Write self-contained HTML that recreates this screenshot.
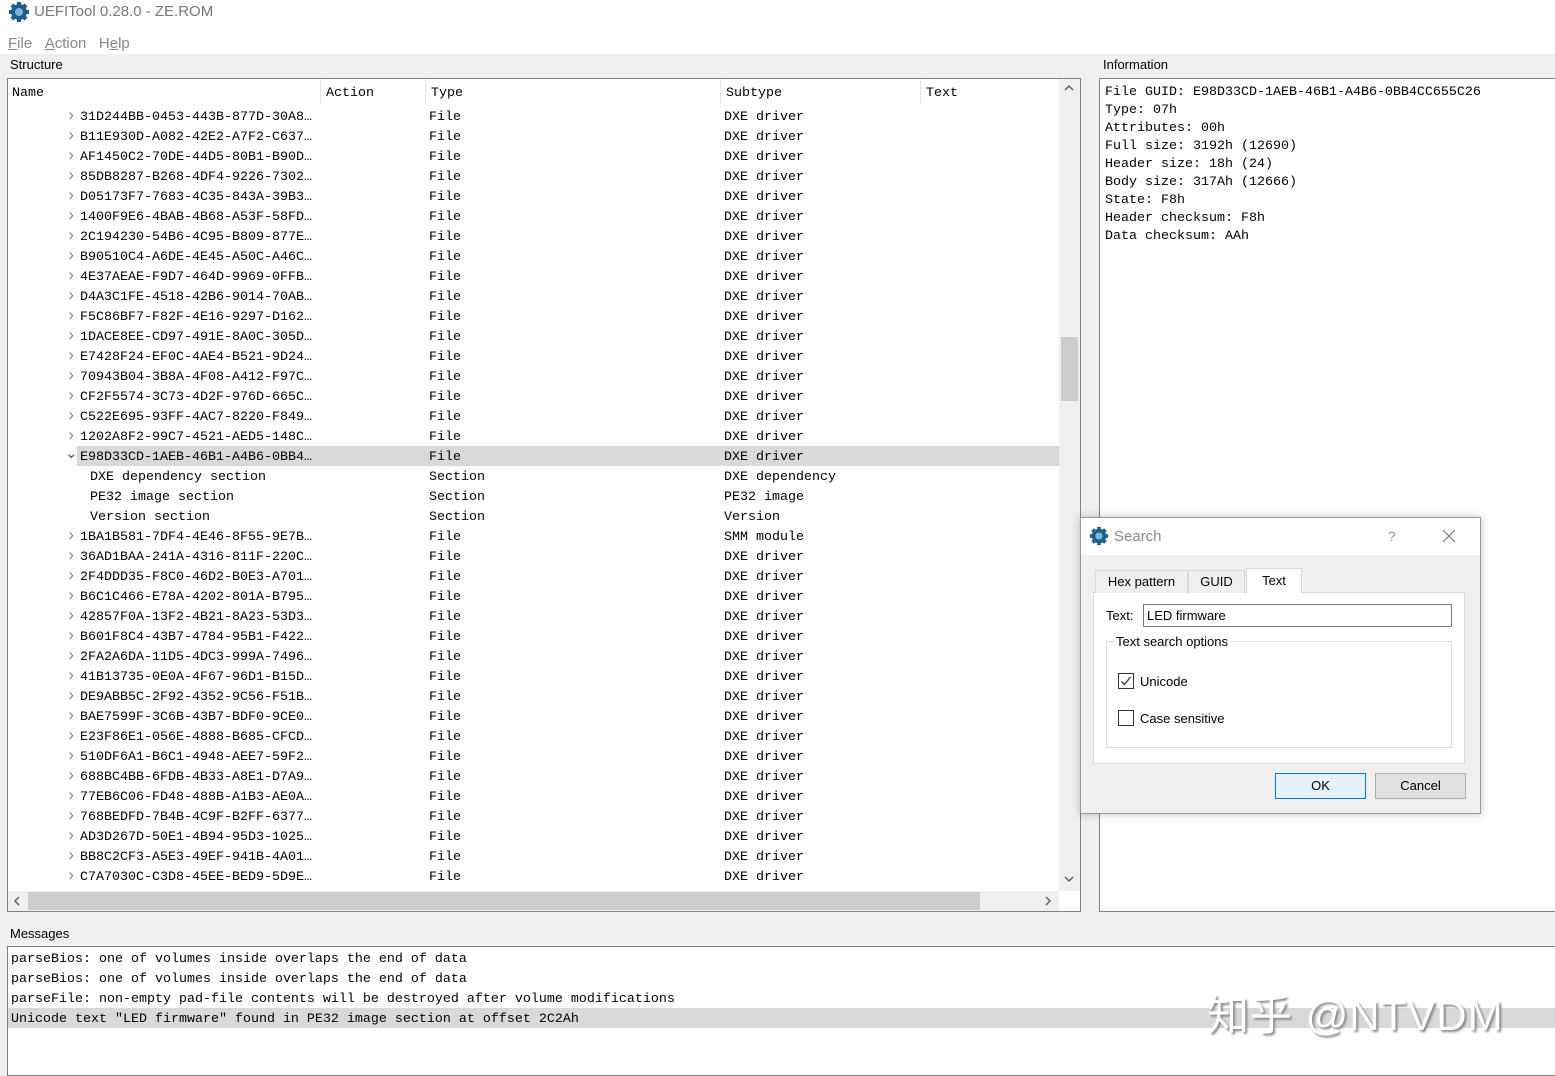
<!DOCTYPE html>
<html><head><meta charset="utf-8"><style>
*{margin:0;padding:0;box-sizing:border-box}
body{width:1555px;height:1071px;position:relative;background:#f0f0f0;font-family:"Liberation Sans",sans-serif;overflow:hidden}
.a{position:absolute}
.ui{font-size:13px;color:#000}
.mono{font-family:"Liberation Mono",monospace;font-size:13.33px;color:#000;white-space:pre}
.row{position:absolute;left:0;height:20px;line-height:20px;width:1051px}
.row span{position:absolute}
.row span.ar{color:#888;font-size:17px;left:58px;top:-1px}
.sel{background:#d9d9d9}
</style></head><body>
<div class="a" style="left:0;top:0;width:1555px;height:54px;background:#fff"></div>
<svg class="a" style="left:8px;top:1px" width="22" height="22" viewBox="0 0 22 22"><g fill="#1d5f8a"><circle cx="11" cy="11" r="8"/><rect x="9" y="1" width="4" height="20"/><rect x="1" y="9" width="20" height="4"/><rect x="9" y="1" width="4" height="20" transform="rotate(45 11 11)"/><rect x="9" y="1" width="4" height="20" transform="rotate(-45 11 11)"/></g><circle cx="11" cy="11" r="4" fill="#7fb4d8"/></svg>
<div class="a" style="left:34px;top:3px;font-size:15px;color:#777">UEFITool 0.28.0 - ZE.ROM</div>
<div class="a" style="left:8px;top:35px;font-size:15px;color:#888"><u>F</u>ile&nbsp;&nbsp;&nbsp;<u>A</u>ction&nbsp;&nbsp;&nbsp;H<u>e</u>lp</div>

<div class="a ui" style="left:10px;top:57px">Structure</div>
<div class="a" style="left:7px;top:78px;width:1074px;height:834px;background:#fff;border:1px solid #828282"></div>
<div class="a" style="left:8px;top:79px;width:1051px;height:26px;background:#fff"></div>
<div class="a mono" style="left:12px;top:86px">Name</div>
<div class="a mono" style="left:326px;top:86px">Action</div>
<div class="a mono" style="left:431px;top:86px">Type</div>
<div class="a mono" style="left:726px;top:86px">Subtype</div>
<div class="a mono" style="left:926px;top:86px">Text</div>
<div class="a" style="left:320px;top:79px;width:1px;height:25px;background:#e5e5e5"></div>
<div class="a" style="left:425px;top:79px;width:1px;height:25px;background:#e5e5e5"></div>
<div class="a" style="left:720px;top:79px;width:1px;height:25px;background:#e5e5e5"></div>
<div class="a" style="left:920px;top:79px;width:1px;height:25px;background:#e5e5e5"></div>

<div class="a" style="left:8px;top:106px;width:1051px;height:785px;overflow:hidden">
<div class="mono" style="position:absolute;left:0;top:2px;width:1051px">
<div class="row" style="top:0"><span class="ar">›</span><span style="left:72px">31D244BB-0453-443B-877D-30A8…</span><span style="left:421px">File</span><span style="left:716px">DXE driver</span></div>
<div class="row" style="top:20px"><span class="ar">›</span><span style="left:72px">B11E930D-A082-42E2-A7F2-C637…</span><span style="left:421px">File</span><span style="left:716px">DXE driver</span></div>
<div class="row" style="top:40px"><span class="ar">›</span><span style="left:72px">AF1450C2-70DE-44D5-80B1-B90D…</span><span style="left:421px">File</span><span style="left:716px">DXE driver</span></div>
<div class="row" style="top:60px"><span class="ar">›</span><span style="left:72px">85DB8287-B268-4DF4-9226-7302…</span><span style="left:421px">File</span><span style="left:716px">DXE driver</span></div>
<div class="row" style="top:80px"><span class="ar">›</span><span style="left:72px">D05173F7-7683-4C35-843A-39B3…</span><span style="left:421px">File</span><span style="left:716px">DXE driver</span></div>
<div class="row" style="top:100px"><span class="ar">›</span><span style="left:72px">1400F9E6-4BAB-4B68-A53F-58FD…</span><span style="left:421px">File</span><span style="left:716px">DXE driver</span></div>
<div class="row" style="top:120px"><span class="ar">›</span><span style="left:72px">2C194230-54B6-4C95-B809-877E…</span><span style="left:421px">File</span><span style="left:716px">DXE driver</span></div>
<div class="row" style="top:140px"><span class="ar">›</span><span style="left:72px">B90510C4-A6DE-4E45-A50C-A46C…</span><span style="left:421px">File</span><span style="left:716px">DXE driver</span></div>
<div class="row" style="top:160px"><span class="ar">›</span><span style="left:72px">4E37AEAE-F9D7-464D-9969-0FFB…</span><span style="left:421px">File</span><span style="left:716px">DXE driver</span></div>
<div class="row" style="top:180px"><span class="ar">›</span><span style="left:72px">D4A3C1FE-4518-42B6-9014-70AB…</span><span style="left:421px">File</span><span style="left:716px">DXE driver</span></div>
<div class="row" style="top:200px"><span class="ar">›</span><span style="left:72px">F5C86BF7-F82F-4E16-9297-D162…</span><span style="left:421px">File</span><span style="left:716px">DXE driver</span></div>
<div class="row" style="top:220px"><span class="ar">›</span><span style="left:72px">1DACE8EE-CD97-491E-8A0C-305D…</span><span style="left:421px">File</span><span style="left:716px">DXE driver</span></div>
<div class="row" style="top:240px"><span class="ar">›</span><span style="left:72px">E7428F24-EF0C-4AE4-B521-9D24…</span><span style="left:421px">File</span><span style="left:716px">DXE driver</span></div>
<div class="row" style="top:260px"><span class="ar">›</span><span style="left:72px">70943B04-3B8A-4F08-A412-F97C…</span><span style="left:421px">File</span><span style="left:716px">DXE driver</span></div>
<div class="row" style="top:280px"><span class="ar">›</span><span style="left:72px">CF2F5574-3C73-4D2F-976D-665C…</span><span style="left:421px">File</span><span style="left:716px">DXE driver</span></div>
<div class="row" style="top:300px"><span class="ar">›</span><span style="left:72px">C522E695-93FF-4AC7-8220-F849…</span><span style="left:421px">File</span><span style="left:716px">DXE driver</span></div>
<div class="row" style="top:320px"><span class="ar">›</span><span style="left:72px">1202A8F2-99C7-4521-AED5-148C…</span><span style="left:421px">File</span><span style="left:716px">DXE driver</span></div>
<div class="row" style="top:340px"><div class="a sel" style="left:69px;top:-2px;width:982px;height:20px"></div><span style="left:57px;color:#555;top:-3px;font-size:15px">⌄</span><span style="left:72px">E98D33CD-1AEB-46B1-A4B6-0BB4…</span><span style="left:421px">File</span><span style="left:716px">DXE driver</span></div>
<div class="row" style="top:360px"><span style="left:82px">DXE dependency section</span><span style="left:421px">Section</span><span style="left:716px">DXE dependency</span></div>
<div class="row" style="top:380px"><span style="left:82px">PE32 image section</span><span style="left:421px">Section</span><span style="left:716px">PE32 image</span></div>
<div class="row" style="top:400px"><span style="left:82px">Version section</span><span style="left:421px">Section</span><span style="left:716px">Version</span></div>
<div class="row" style="top:420px"><span class="ar">›</span><span style="left:72px">1BA1B581-7DF4-4E46-8F55-9E7B…</span><span style="left:421px">File</span><span style="left:716px">SMM module</span></div>
<div class="row" style="top:440px"><span class="ar">›</span><span style="left:72px">36AD1BAA-241A-4316-811F-220C…</span><span style="left:421px">File</span><span style="left:716px">DXE driver</span></div>
<div class="row" style="top:460px"><span class="ar">›</span><span style="left:72px">2F4DDD35-F8C0-46D2-B0E3-A701…</span><span style="left:421px">File</span><span style="left:716px">DXE driver</span></div>
<div class="row" style="top:480px"><span class="ar">›</span><span style="left:72px">B6C1C466-E78A-4202-801A-B795…</span><span style="left:421px">File</span><span style="left:716px">DXE driver</span></div>
<div class="row" style="top:500px"><span class="ar">›</span><span style="left:72px">42857F0A-13F2-4B21-8A23-53D3…</span><span style="left:421px">File</span><span style="left:716px">DXE driver</span></div>
<div class="row" style="top:520px"><span class="ar">›</span><span style="left:72px">B601F8C4-43B7-4784-95B1-F422…</span><span style="left:421px">File</span><span style="left:716px">DXE driver</span></div>
<div class="row" style="top:540px"><span class="ar">›</span><span style="left:72px">2FA2A6DA-11D5-4DC3-999A-7496…</span><span style="left:421px">File</span><span style="left:716px">DXE driver</span></div>
<div class="row" style="top:560px"><span class="ar">›</span><span style="left:72px">41B13735-0E0A-4F67-96D1-B15D…</span><span style="left:421px">File</span><span style="left:716px">DXE driver</span></div>
<div class="row" style="top:580px"><span class="ar">›</span><span style="left:72px">DE9ABB5C-2F92-4352-9C56-F51B…</span><span style="left:421px">File</span><span style="left:716px">DXE driver</span></div>
<div class="row" style="top:600px"><span class="ar">›</span><span style="left:72px">BAE7599F-3C6B-43B7-BDF0-9CE0…</span><span style="left:421px">File</span><span style="left:716px">DXE driver</span></div>
<div class="row" style="top:620px"><span class="ar">›</span><span style="left:72px">E23F86E1-056E-4888-B685-CFCD…</span><span style="left:421px">File</span><span style="left:716px">DXE driver</span></div>
<div class="row" style="top:640px"><span class="ar">›</span><span style="left:72px">510DF6A1-B6C1-4948-AEE7-59F2…</span><span style="left:421px">File</span><span style="left:716px">DXE driver</span></div>
<div class="row" style="top:660px"><span class="ar">›</span><span style="left:72px">688BC4BB-6FDB-4B33-A8E1-D7A9…</span><span style="left:421px">File</span><span style="left:716px">DXE driver</span></div>
<div class="row" style="top:680px"><span class="ar">›</span><span style="left:72px">77EB6C06-FD48-488B-A1B3-AE0A…</span><span style="left:421px">File</span><span style="left:716px">DXE driver</span></div>
<div class="row" style="top:700px"><span class="ar">›</span><span style="left:72px">768BEDFD-7B4B-4C9F-B2FF-6377…</span><span style="left:421px">File</span><span style="left:716px">DXE driver</span></div>
<div class="row" style="top:720px"><span class="ar">›</span><span style="left:72px">AD3D267D-50E1-4B94-95D3-1025…</span><span style="left:421px">File</span><span style="left:716px">DXE driver</span></div>
<div class="row" style="top:740px"><span class="ar">›</span><span style="left:72px">BB8C2CF3-A5E3-49EF-941B-4A01…</span><span style="left:421px">File</span><span style="left:716px">DXE driver</span></div>
<div class="row" style="top:760px"><span class="ar">›</span><span style="left:72px">C7A7030C-C3D8-45EE-BED9-5D9E…</span><span style="left:421px">File</span><span style="left:716px">DXE driver</span></div>
</div></div>

<div class="a" style="left:1059px;top:79px;width:21px;height:812px;background:#f0f0f0"></div>
<div class="a" style="left:1061px;top:337px;width:17px;height:64px;background:#cdcdcd"></div>
<svg class="a" style="left:1063px;top:83px" width="12" height="10"><path d="M2 7 L6 3 L10 7" stroke="#606060" stroke-width="1.5" fill="none"/></svg>
<svg class="a" style="left:1063px;top:874px" width="12" height="10"><path d="M2 3 L6 7 L10 3" stroke="#606060" stroke-width="1.5" fill="none"/></svg>
<div class="a" style="left:8px;top:891px;width:1051px;height:20px;background:#f0f0f0"></div>
<div class="a" style="left:28px;top:892px;width:952px;height:18px;background:#cdcdcd"></div>
<svg class="a" style="left:12px;top:895px" width="10" height="12"><path d="M7 2 L3 6 L7 10" stroke="#606060" stroke-width="1.5" fill="none"/></svg>
<svg class="a" style="left:1043px;top:895px" width="10" height="12"><path d="M3 2 L7 6 L3 10" stroke="#606060" stroke-width="1.5" fill="none"/></svg>

<div class="a ui" style="left:1103px;top:57px">Information</div>
<div class="a" style="left:1099px;top:78px;width:460px;height:834px;background:#fff;border:1px solid #828282"></div>
<div class="a mono" style="left:1105px;top:84px;line-height:18px">File GUID: E98D33CD-1AEB-46B1-A4B6-0BB4CC655C26
Type: 07h
Attributes: 00h
Full size: 3192h (12690)
Header size: 18h (24)
Body size: 317Ah (12666)
State: F8h
Header checksum: F8h
Data checksum: AAh</div>

<div class="a ui" style="left:10px;top:926px">Messages</div>
<div class="a" style="left:7px;top:946px;width:1552px;height:130px;background:#fff;border:1px solid #828282"></div>
<div class="a" style="left:8px;top:1008px;width:1547px;height:20px;background:#d9d9d9"></div>
<div class="a mono" style="left:11px;top:948px;line-height:20px;padding-top:2px">parseBios: one of volumes inside overlaps the end of data
parseBios: one of volumes inside overlaps the end of data
parseFile: non-empty pad-file contents will be destroyed after volume modifications
Unicode text "LED firmware" found in PE32 image section at offset 2C2Ah</div>
<div class="a" style="left:1207px;top:982px;font-family:'Liberation Sans','Noto Sans CJK SC',sans-serif;font-size:42px;color:#fff;text-shadow:2px 2px 2px #888;letter-spacing:1px">知乎 @NTVDM</div>

<!-- dialog -->
<div class="a" style="left:1080px;top:517px;width:401px;height:297px;background:#f0f0f0;border:1px solid #999;box-shadow:0 0 8px rgba(0,0,0,.25)"></div>
<div class="a" style="left:1081px;top:518px;width:399px;height:37px;background:#fff"></div>
<svg class="a" style="left:1089px;top:526px" width="20" height="20" viewBox="0 0 22 22"><g fill="#1d5f8a"><circle cx="11" cy="11" r="8"/><rect x="9" y="1" width="4" height="20"/><rect x="1" y="9" width="20" height="4"/><rect x="9" y="1" width="4" height="20" transform="rotate(45 11 11)"/><rect x="9" y="1" width="4" height="20" transform="rotate(-45 11 11)"/></g><circle cx="11" cy="11" r="4" fill="#7fb4d8"/></svg>
<div class="a" style="left:1114px;top:528px;font-size:15px;color:#888">Search</div>
<div class="a" style="left:1388px;top:528px;font-size:14px;color:#999">?</div>
<svg class="a" style="left:1442px;top:529px" width="14" height="14"><path d="M1 1 L13 13 M13 1 L1 13" stroke="#777" stroke-width="1.2"/></svg>
<div class="a" style="left:1093px;top:592px;width:372px;height:172px;background:#fff;border:1px solid #d9d9d9"></div>
<div class="a ui" style="left:1095px;top:570px;width:93px;height:23px;border:1px solid #d9d9d9;border-bottom:none;background:#f0f0f0;text-align:center;line-height:22px">Hex pattern</div>
<div class="a ui" style="left:1188px;top:570px;width:57px;height:23px;border:1px solid #d9d9d9;border-bottom:none;background:#f0f0f0;text-align:center;line-height:22px">GUID</div>
<div class="a ui" style="left:1246px;top:568px;width:56px;height:25px;border:1px solid #d9d9d9;border-bottom:none;background:#fff;text-align:center;line-height:24px">Text</div>
<div class="a ui" style="left:1106px;top:608px">Text:</div>
<div class="a ui" style="left:1143px;top:604px;width:309px;height:23px;border:1px solid #7a7a7a;background:#fff;padding-left:3px;line-height:21px">LED firmware</div>
<div class="a" style="left:1106px;top:641px;width:346px;height:107px;border:1px solid #dcdcdc"></div>
<div class="a ui" style="left:1114px;top:634px;background:#fff;padding:0 2px">Text search options</div>
<div class="a" style="left:1118px;top:673px;width:16px;height:16px;border:1px solid #333;background:#fff"></div>
<svg class="a" style="left:1119px;top:674px" width="14" height="14"><path d="M2.5 7.5 L5.5 10.5 L11.5 3" stroke="#333" stroke-width="1.3" fill="none"/></svg>
<div class="a ui" style="left:1140px;top:674px">Unicode</div>
<div class="a" style="left:1118px;top:710px;width:16px;height:16px;border:1px solid #333;background:#fff"></div>
<div class="a ui" style="left:1140px;top:711px">Case sensitive</div>
<div class="a ui" style="left:1275px;top:773px;width:91px;height:26px;border:1px solid #0078d7;background:#e5f1fb;text-align:center;line-height:24px">OK</div>
<div class="a ui" style="left:1375px;top:773px;width:91px;height:26px;border:1px solid #adadad;background:#e1e1e1;text-align:center;line-height:24px">Cancel</div>
</body></html>
